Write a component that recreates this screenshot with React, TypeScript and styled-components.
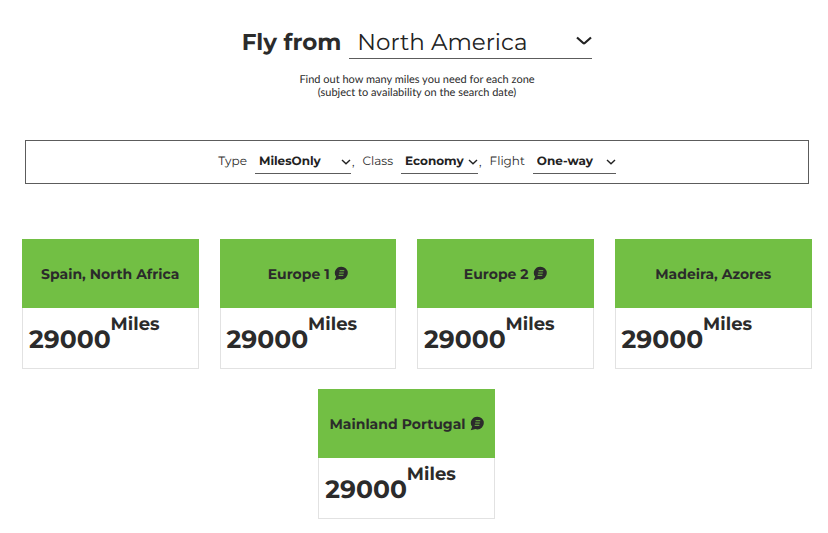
import React, { useId, useState } from 'react';
import styled, { createGlobalStyle } from 'styled-components';

const GlobalStyle = createGlobalStyle`
  *, *::before, *::after { box-sizing: border-box; }
  body {
    margin: 0;
    background: #fff;
    color: #2b2b2b;
    font-family: Montserrat, Inter, sans-serif;
    text-rendering: geometricPrecision;
  }
`;

const Page = styled.main`
  padding: 24px 16px 14px 22px;
`;

const Heading = styled.header`
  display: flex;
  justify-content: center;
  align-items: center;
  gap: 8px;
`;

const HeadingLabel = styled.label`
  padding-top: 1px;
  font-size: 23px;
  line-height: 34px;
  font-weight: 700;
`;

const SelectBox = styled.span<{ $width: number }>`
  display: grid;
  grid-template-columns: 1fr auto;
  align-items: center;
  width: ${(p) => p.$width}px;
  border-bottom: 1px solid #5c5c5c;
`;

const SelectInput = styled.select<{ $large?: boolean }>`
  grid-area: 1 / 1 / 2 / 3;
  width: 100%;
  height: ${(p) => (p.$large ? 34 : 22)}px;
  padding: ${(p) => (p.$large ? '1px 8px 0' : '0 4px 1px')};
  appearance: none;
  border: 0;
  border-radius: 0;
  background: transparent;
  color: #222;
  font-family: inherit;
  font-size: ${(p) => (p.$large ? 23 : 12)}px;
  font-weight: ${(p) => (p.$large ? 400 : 700)};
  text-rendering: inherit;
  cursor: pointer;
`;

const Arrow = styled.svg`
  grid-area: 1 / 2;
  pointer-events: none;
`;

const Note = styled.p`
  margin: 14px 0 0;
  text-align: center;
  font-family: Lato, sans-serif;
  font-size: 11px;
  line-height: 13px;
`;

const Filters = styled.form`
  display: flex;
  justify-content: center;
  align-items: center;
  gap: 8px;
  height: 44px;
  margin: 41px 3px 0;
  border: 1px solid #5c5c5c;
`;

const FilterGroup = styled.div`
  display: flex;
  align-items: center;
  gap: 8px;
`;

const FilterLabel = styled.label`
  font-size: 12px;
  line-height: 16px;
`;

const FilterControl = styled.span`
  display: flex;
  align-items: center;
  gap: 1px;
  font-size: 12px;
`;

const Zones = styled.ul`
  display: flex;
  flex-wrap: wrap;
  justify-content: center;
  row-gap: 20px;
  margin: 55px 0 0;
  padding: 0;
  list-style: none;
`;

const ZoneSlot = styled.li`
  flex: 0 0 25%;
  padding-right: 21px;

  &:nth-child(4n) { padding-right: 0; }
`;

const Card = styled.article`
  border: 1px solid #e2e2e2;
  border-top: 0;
`;

const CardTitle = styled.h2`
  display: flex;
  justify-content: center;
  align-items: center;
  gap: 4px;
  height: 69px;
  margin: 0 -1px;
  background: #72bf44;
  font-size: 14px;
  line-height: 18px;
  font-weight: 700;
  white-space: nowrap;
`;

const Price = styled.p`
  display: flex;
  align-items: flex-start;
  height: 60px;
  margin: 0;
  padding: 4px 6px;
`;

const Amount = styled.span`
  padding-top: 13px;
  font-size: 25px;
  line-height: 30px;
  font-weight: 700;
`;

const Unit = styled.span`
  font-size: 18px;
  line-height: 24px;
  font-weight: 700;
`;

function Chevron({ large }: { large?: boolean }) {
  return large ? (
    <Arrow width="16" height="10" viewBox="0 0 16 10" fill="none" stroke="#222" strokeWidth="2.2" aria-hidden="true">
      <path d="M1 1.5 L7.2 7 Q8 7.7 8.8 7 L15 1.5" />
    </Arrow>
  ) : (
    <Arrow width="10" height="6" viewBox="0 0 10 6" fill="none" stroke="#222" strokeWidth="1.4" aria-hidden="true">
      <path d="M1 1 L5 4.8 L9 1" />
    </Arrow>
  );
}

function InfoBubble() {
  return (
    <svg width="14" height="15" viewBox="0 0 15 15" role="img" aria-label="More information">
      <path d="M8 0.2a6.8 6.8 0 1 1 0 13.6c-.8 0-1.5-.1-2.2-.3L.8 14.8l1.5-3.7A6.8 6.8 0 0 1 8 .2z" fill="#2b2b2b" />
      <path d="M6 4.5h5M5.5 7h5M5 9.5h5" stroke="#72bf44" strokeWidth="1" />
    </svg>
  );
}

function Dropdown(props: { id: string; options: string[]; width: number; large?: boolean }) {
  const [value, setValue] = useState(props.options[0]);
  return (
    <SelectBox $width={props.width}>
      <SelectInput id={props.id} $large={props.large} value={value} onChange={(e) => setValue(e.target.value)}>
        {props.options.map((o) => (
          <option key={o}>{o}</option>
        ))}
      </SelectInput>
      <Chevron large={props.large} />
    </SelectBox>
  );
}

const filters = [
  { label: 'Type', options: ['MilesOnly'], width: 96 },
  { label: 'Class', options: ['Economy'], width: 77 },
  { label: 'Flight', options: ['One-way'], width: 83 },
];

const zones = [
  { name: 'Spain, North Africa', miles: 29000, info: false },
  { name: 'Europe 1', miles: 29000, info: true },
  { name: 'Europe 2', miles: 29000, info: true },
  { name: 'Madeira, Azores', miles: 29000, info: false },
  { name: 'Mainland Portugal', miles: 29000, info: true },
];

export default function App() {
  const id = useId();
  return (
    <>
      <GlobalStyle />
      <Page>
        <Heading>
          <HeadingLabel htmlFor={`${id}from`}>Fly from</HeadingLabel>
          <Dropdown id={`${id}from`} options={['North America']} width={243} large />
        </Heading>
        <Note>
          Find out how many miles you need for each zone
          <br />
          (subject to availability on the search date)
        </Note>
        <Filters>
          {filters.map((f, i) => (
            <FilterGroup key={f.label}>
              <FilterLabel htmlFor={id + f.label}>{f.label}</FilterLabel>
              <FilterControl>
                <Dropdown id={id + f.label} options={f.options} width={f.width} />
                {i < filters.length - 1 && ','}
              </FilterControl>
            </FilterGroup>
          ))}
        </Filters>
        <Zones>
          {zones.map((z) => (
            <ZoneSlot key={z.name}>
              <Card>
                <CardTitle>
                  {z.name}
                  {z.info && <InfoBubble />}
                </CardTitle>
                <Price>
                  <Amount>{z.miles}</Amount>
                  <Unit>Miles</Unit>
                </Price>
              </Card>
            </ZoneSlot>
          ))}
        </Zones>
      </Page>
    </>
  );
}
